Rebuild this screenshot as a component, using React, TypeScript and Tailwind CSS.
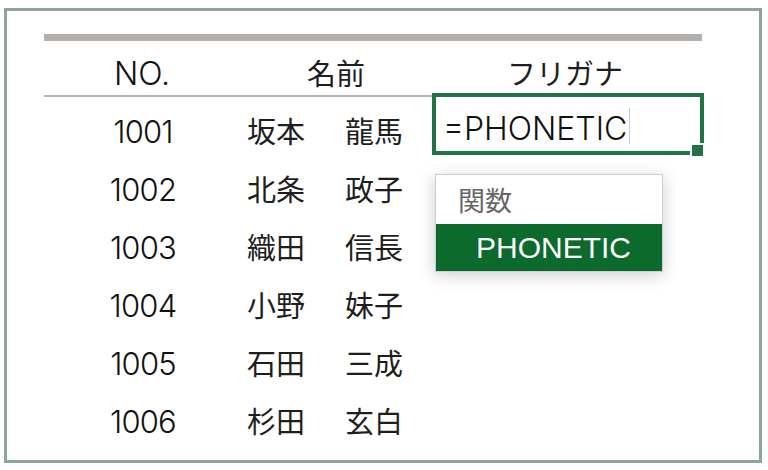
import React from 'react';

const rows = [
  { no: '1001', sei: '坂本', mei: '龍馬' },
  { no: '1002', sei: '北条', mei: '政子' },
  { no: '1003', sei: '織田', mei: '信長' },
  { no: '1004', sei: '小野', mei: '妹子' },
  { no: '1005', sei: '石田', mei: '三成' },
  { no: '1006', sei: '杉田', mei: '玄白' },
];

const jp = "font-['Noto_Sans_CJK_JP',sans-serif]";
const latin = "font-['Inter','Noto_Sans_CJK_JP',sans-serif] font-light text-[#111]";

// Selected cell with fill handle and the function suggestion list
const ActiveCell: React.FC = () => (
  <>
    <div className="absolute left-0 top-[-8px] w-[272px] h-[62px] border-[4px] border-[#217346] bg-white flex items-center pl-[7px]">
      <span className={`${latin} text-[32px] leading-none pt-[9px]`}>=PHONETIC</span>
      <span className="ml-[2px] mt-[3px] w-px h-[36px] bg-[#c8c8c8]" />
      <div className="absolute right-[-5px] bottom-[-7px] w-[15px] h-[15px] bg-[#217346] border-2 border-white" />
    </div>
    <div className="absolute left-[3px] top-[73px] w-[228px] h-[98px] border border-[#cfcfcf] bg-white shadow-[0_3px_16px_rgba(0,0,0,0.2)] flex flex-col z-10">
      <div className="h-[49px] flex items-center pl-[22px] text-[27px] text-[#666] leading-none">関数</div>
      <div className="flex-1 bg-[#0b6a2c] flex items-center pl-[40px] text-white text-[30px] leading-none font-['Liberation_Sans',Arial,sans-serif]">
        PHONETIC
      </div>
    </div>
  </>
);

export default function App() {
  return (
    <div className={`w-[768px] h-[470px] bg-white pt-[8px] pl-[4px] ${jp} text-[#1e1e1e]`}>
      <div className="w-[758px] h-[455px] border-[3px] border-[#8fa4a1] pt-[23px] pl-[37px]">
        <div className="w-[658px] h-[7px] bg-[#b2afad]" />
        <div className="w-[658px] h-[54px] flex items-center pt-[8px] text-[29px] leading-none">
          <div className={`w-[196px] text-center pt-[3px] text-[32px] ${latin}`}>NO.</div>
          <div className="w-[192px] text-center">名前</div>
          <div className="w-[270px] text-center pr-[4px]">フリガナ</div>
        </div>
        <div className="w-[658px] h-[2px] bg-[#b4b4b4]" />
        <div className="mt-[4px]">
          {rows.map((r, i) => (
            <div key={r.no} className="h-[58px] flex items-center text-[29px] leading-none">
              <div className={`w-[196px] text-center pt-[2px] pl-[2px] text-[31px] tracking-[-0.8px] ${latin}`}>{r.no}</div>
              <div className="w-[192px] flex pl-[7px] gap-[40px]">
                <span>{r.sei}</span>
                <span>{r.mei}</span>
              </div>
              <div className="w-[270px] h-full relative">{i === 0 && <ActiveCell />}</div>
            </div>
          ))}
        </div>
      </div>
    </div>
  );
}
